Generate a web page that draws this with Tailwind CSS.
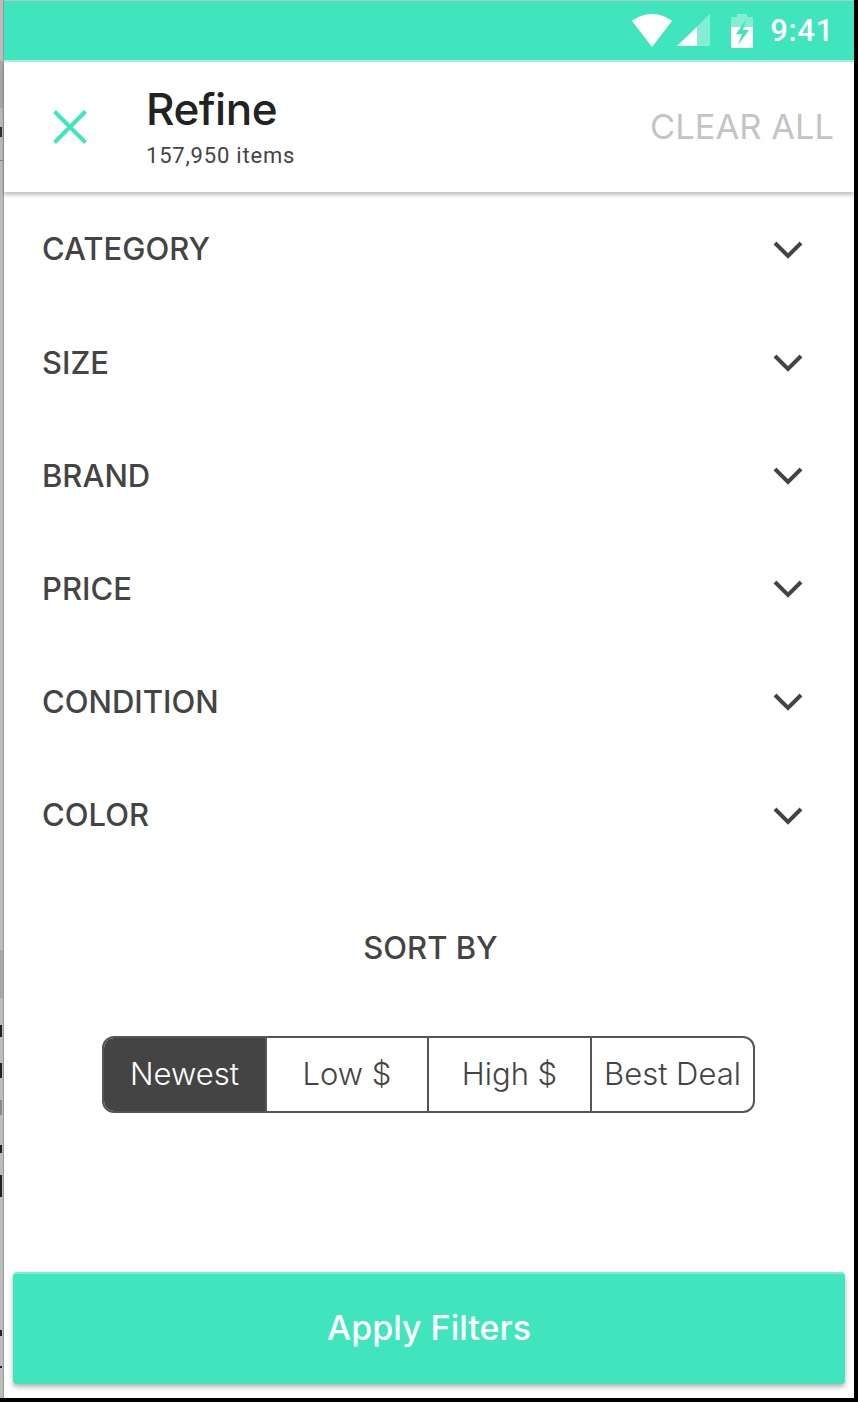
<!DOCTYPE html>
<html lang="en">
  <head>
    <meta charset="UTF-8" />
    <meta name="viewport" content="width=device-width, initial-scale=1.0" />
    <title>Refine</title>
    <script src="https://cdn.jsdelivr.net/npm/@tailwindcss/browser@4"></script>
  </head>
  <body class="bg-black h-[1402px] w-[858px] overflow-hidden font-['Inter',sans-serif]">
    <div class="relative flex h-[1398px] w-[854px]">
      <!-- page behind the drawer -->
      <div class="relative w-[4px] shrink-0 bg-[#bcbcbc] border-r border-[#9a9a9a] overflow-hidden">
        <div class="absolute left-0 top-[61px] w-full h-[47px] bg-[#a8a8a8]"></div>
        <div class="absolute left-0 top-[160px] w-full h-[1px] bg-[#888]"></div>
        <div class="absolute left-0 top-[127px] w-[2px] h-[10px] bg-[#333]"></div>
        <div class="absolute left-0 top-[950px] w-full h-[48px] bg-[#a8a8a8]"></div>
        <div class="absolute left-0 top-[1025px] w-[2px] h-[12px] bg-[#222]"></div>
        <div class="absolute left-0 top-[1063px] w-[2px] h-[15px] bg-[#222]"></div>
        <div class="absolute left-0 top-[1100px] w-[2px] h-[15px] bg-[#888]"></div>
        <div class="absolute left-0 top-[1145px] w-[2px] h-[8px] bg-[#222]"></div>
        <div class="absolute left-0 top-[1175px] w-[2px] h-[22px] bg-[#222]"></div>
        <div class="absolute left-0 top-[1330px] w-[2px] h-[6px] bg-[#222]"></div>
        <div class="absolute left-0 top-[1366px] w-[2px] h-[2px] bg-[#222]"></div>
      </div>

      <div class="flex-1 flex flex-col min-w-0 bg-white">
        <!-- status bar -->
        <div class="h-[62px] shrink-0 bg-[#41e5bd] border-t border-[#b8c8c4] border-b-2 border-b-[#a9f2df] flex items-center justify-end pr-[20px] -ml-[4px]">
          <svg width="40" height="34" viewBox="0 0 40 34" class="mr-[5px]">
            <path d="M0 7C5 3 12 0 20 0s15 3 20 7L20 33Z" fill="#fff" />
          </svg>
          <svg width="33" height="33" viewBox="0 0 33 33" class="mr-[20px]">
            <path d="M33 0V32H0Z" fill="#fff" fill-opacity="0.35" />
            <path d="M20 13V32H0Z" fill="#fff" />
          </svg>
          <svg width="24" height="34" viewBox="0 0 24 34" class="mr-[16px]">
            <path d="M7 0H17V3H23V13H1V3H7Z" fill="#fff" fill-opacity="0.35" />
            <path d="M1 13H23V34H1Z" fill="#fff" />
            <path d="M16 6 6 20H12L8 31 19 16H13Z" fill="#41e5bd" />
          </svg>
          <span class="font-['Roboto',sans-serif] font-medium text-[31px] leading-none text-white tracking-[0.7px]">9:41</span>
        </div>

        <!-- header -->
        <header class="h-[130px] shrink-0 flex items-center shadow-[0_3px_4px_rgba(0,0,0,0.25)] relative z-10 bg-white">
          <svg width="34" height="34" viewBox="0 0 34 34" class="ml-[49px] shrink-0">
            <path d="M1.5 1.5 32.5 32.5M32.5 1.5 1.5 32.5" stroke="#41e5bd" stroke-width="4" fill="none" />
          </svg>
          <div class="ml-[59px] flex flex-col">
            <span class="text-[44px] leading-[48px] font-medium text-[#222] -mt-[1px] tracking-[-0.5px]">Refine</span>
            <span class="font-['Roboto',sans-serif] text-[22px] leading-[26px] text-[#444] tracking-[0.8px] mt-[10px]">157,950 items</span>
          </div>
          <span class="ml-auto mr-[20px] text-[34.5px] text-[#c4c4c4] leading-none">CLEAR ALL</span>
        </header>

        <!-- filter rows -->
        <div class="flex flex-col">
          <div class="h-[113.2px] flex items-center justify-between pl-[38px] pr-[51px]">
            <span class="text-[31px] font-medium text-[#444] mt-[2px]">CATEGORY</span>
            <svg width="30" height="20" viewBox="0 0 30 20" class="mt-[2px]"><path d="M2 3 15 16 28 3" stroke="#444" stroke-width="4" fill="none" /></svg>
          </div>
          <div class="h-[113.2px] flex items-center justify-between pl-[38px] pr-[51px]">
            <span class="text-[31px] font-medium text-[#444] mt-[2px]">SIZE</span>
            <svg width="30" height="20" viewBox="0 0 30 20" class="mt-[2px]"><path d="M2 3 15 16 28 3" stroke="#444" stroke-width="4" fill="none" /></svg>
          </div>
          <div class="h-[113.2px] flex items-center justify-between pl-[38px] pr-[51px]">
            <span class="text-[31px] font-medium text-[#444] mt-[2px]">BRAND</span>
            <svg width="30" height="20" viewBox="0 0 30 20" class="mt-[2px]"><path d="M2 3 15 16 28 3" stroke="#444" stroke-width="4" fill="none" /></svg>
          </div>
          <div class="h-[113.2px] flex items-center justify-between pl-[38px] pr-[51px]">
            <span class="text-[31px] font-medium text-[#444] mt-[2px]">PRICE</span>
            <svg width="30" height="20" viewBox="0 0 30 20" class="mt-[2px]"><path d="M2 3 15 16 28 3" stroke="#444" stroke-width="4" fill="none" /></svg>
          </div>
          <div class="h-[113.2px] flex items-center justify-between pl-[38px] pr-[51px]">
            <span class="text-[31px] font-medium text-[#444] mt-[2px]">CONDITION</span>
            <svg width="30" height="20" viewBox="0 0 30 20" class="mt-[2px]"><path d="M2 3 15 16 28 3" stroke="#444" stroke-width="4" fill="none" /></svg>
          </div>
          <div class="h-[113.2px] flex items-center justify-between pl-[38px] pr-[51px]">
            <span class="text-[31px] font-medium text-[#444] mt-[2px]">COLOR</span>
            <svg width="30" height="20" viewBox="0 0 30 20" class="mt-[2px]"><path d="M2 3 15 16 28 3" stroke="#444" stroke-width="4" fill="none" /></svg>
          </div>
        </div>

        <!-- sort -->
        <div class="mt-[58px] text-center text-[31px] leading-[38px] font-medium text-[#444] pl-[3px]">SORT BY</div>
        <div class="mt-[69px] ml-[98px] w-[653px] h-[77px] flex rounded-[12px] border-2 border-[#555] overflow-hidden text-[31px] font-light text-[#444]">
          <div class="w-[161px] bg-[#444] text-white flex items-center justify-center">Newest</div>
          <div class="w-[162px] border-l-2 border-[#555] flex items-center justify-center">Low $</div>
          <div class="w-[163px] border-l-2 border-[#555] flex items-center justify-center">High $</div>
          <div class="flex-1 border-l-2 border-[#555] flex items-center justify-center whitespace-nowrap">Best Deal</div>
        </div>

        <!-- apply -->
        <button class="mt-auto mb-[14px] ml-[9px] mr-[9px] h-[112px] shrink-0 rounded-[4px] bg-[#41e5bd] border-t-2 border-[#7dedd1] pb-[3px] text-white text-[34px] font-medium shadow-[0_3px_5px_rgba(0,0,0,0.3)]">
          Apply Filters
        </button>
      </div>
    </div>
  </body>
</html>
